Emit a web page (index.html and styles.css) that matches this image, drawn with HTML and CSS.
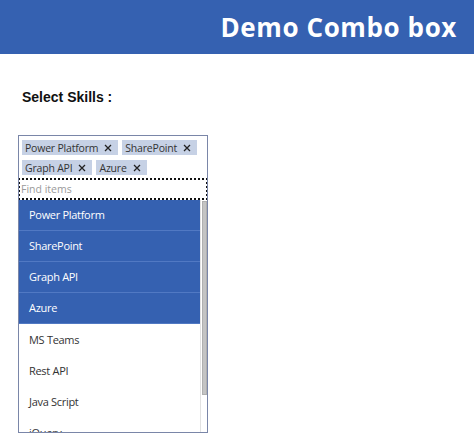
FILE: index.html
```html
<!DOCTYPE html>
<html>
<head>
<meta charset="utf-8">
<link rel="stylesheet" href="styles.css">
</head>
<body>
<header class="header"><h1 class="title">Demo Combo box</h1></header>
<main class="content">
  <div class="label">Select Skills :</div>
  <div class="combo">
    <div class="tags">
      <span class="tag">Power Platform<svg class="x" viewBox="0 0 8 8"><path d="M1 1L7 7M7 1L1 7"/></svg></span>
      <span class="tag">SharePoint<svg class="x" viewBox="0 0 8 8"><path d="M1 1L7 7M7 1L1 7"/></svg></span>
      <span class="tag">Graph API<svg class="x" viewBox="0 0 8 8"><path d="M1 1L7 7M7 1L1 7"/></svg></span>
      <span class="tag">Azure<svg class="x" viewBox="0 0 8 8"><path d="M1 1L7 7M7 1L1 7"/></svg></span>
    </div>
    <div class="search">Find items</div>
    <div class="listwrap">
      <ul class="list">
        <li class="item sel">Power Platform</li>
        <li class="item sel">SharePoint</li>
        <li class="item sel">Graph API</li>
        <li class="item sel">Azure</li>
        <li class="item">MS Teams</li>
        <li class="item">Rest API</li>
        <li class="item">Java Script</li>
        <li class="item">jQuery</li>
      </ul>
      <div class="scroll"><div class="thumb"></div></div>
    </div>
  </div>
</main>
</body>
</html>
```
FILE: styles.css
```css
html, body { margin: 0; padding: 0; background: #fff; }
body { font-family: "Open Sans", "Noto Sans", sans-serif; }
.header {
  height: 54px;
  background: #3561b1;
  display: flex;
  align-items: center;
  justify-content: flex-end;
  padding-right: 17px;
}
.title {
  margin: 0;
  color: #fff;
  font-family: "Open Sans", sans-serif;
  font-weight: 700;
  font-size: 26px;
  letter-spacing: 0.6px;
}
.content { padding: 35px 0 0 18px; }
.label {
  font-family: "Liberation Sans", Arial, sans-serif;
  font-weight: 700;
  font-size: 14px;
  color: #111;
  padding-left: 4px;
  height: 20px;
}
.combo {
  margin-top: 26px;
  width: 188px;
  height: 296px;
  border: 1px solid #7a86a8;
  display: flex;
  flex-direction: column;
  overflow: hidden;
}
.tags {
  display: flex;
  flex-wrap: wrap;
  gap: 5px 4px;
  padding: 4px 3px 3px 3px;
}
.tag {
  display: flex;
  align-items: center;
  height: 15px;
  background: #c6d1e5;
  color: #333;
  font-size: 10.5px;
  letter-spacing: -0.2px;
  padding: 0 6px 0 3px;
}
.x {
  width: 8px;
  height: 8px;
  margin-left: 6px;
  stroke: #222;
  stroke-width: 1.3;
  fill: none;
}
.search {
  border: 2px dotted #111;
  margin: 0 -1px;
  height: 18px;
  font-size: 10.5px;
  line-height: 18px;
  color: #9a9a9a;
  padding-left: 1px;
}
.listwrap { display: flex; flex: 1; min-height: 0; }
.list {
  list-style: none;
  margin: 0;
  padding: 0;
  flex: 1;
  overflow: hidden;
}
.item {
  height: 31px;
  line-height: 31px;
  padding-left: 10px;
  font-size: 11px;
  letter-spacing: -0.3px;
  color: #333;
}
.item.sel {
  background: #3561b1;
  color: #fff;
  border-bottom: 1px solid #5179c3;
  height: 30px;
  line-height: 30px;
}
.scroll {
  width: 6px;
  border-left: 1px solid #e2e2e2;
  display: flex;
  justify-content: center;
}
.thumb {
  width: 3px;
  height: 192px;
  margin-top: 1px;
  background: #c4c4c4;
  border: 1px solid #b0b0b0;
}
```
